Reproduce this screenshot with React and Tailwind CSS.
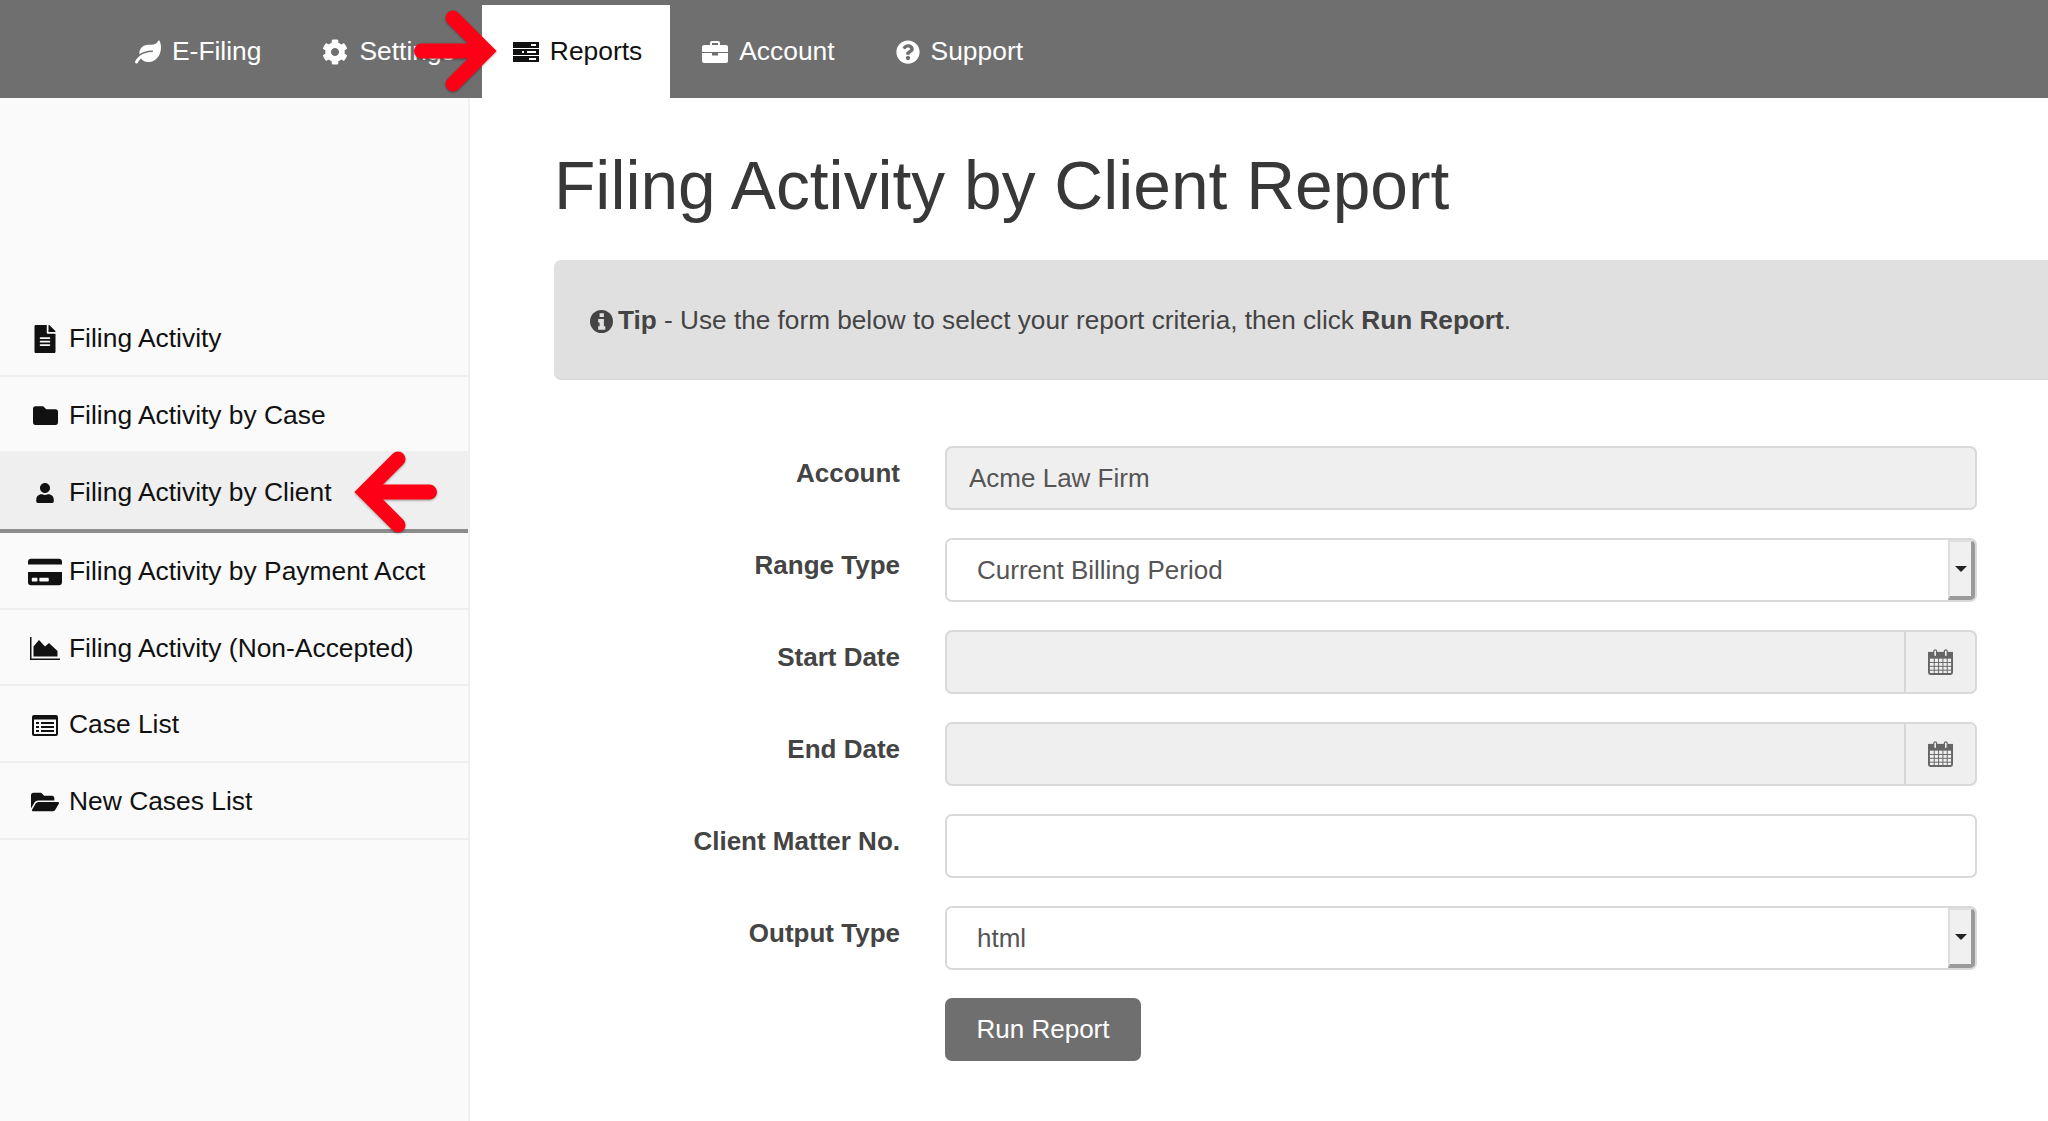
import React from 'react';
import {
  FaLeaf, FaCog, FaQuestionCircle, FaFileAlt, FaFolder, FaUser,
  FaCreditCard, FaFolderOpen,
} from 'react-icons/fa';

function ServerIcon({ className }) {
  return (
    <svg viewBox="0 0 26 20" className={className}>
      <rect x="0" y="0" width="26" height="6" fill="currentColor" />
      <rect x="0" y="7" width="26" height="6" fill="currentColor" />
      <rect x="0" y="14" width="26" height="6" fill="currentColor" />
      <rect x="18" y="2" width="5" height="2" fill="#fff" />
      <rect x="9" y="9" width="2" height="2" fill="#fff" />
      <rect x="14" y="9" width="9" height="2" fill="#fff" />
      <rect x="16" y="16" width="7" height="2" fill="#fff" />
    </svg>
  );
}

function BriefcaseIcon({ className }) {
  return (
    <svg viewBox="0 0 26 22" className={className}>
      <path fill="currentColor" fillRule="evenodd" d="M8 4V2a2 2 0 0 1 2-2h6a2 2 0 0 1 2 2v2h6a2 2 0 0 1 2 2v5H0V6a2 2 0 0 1 2-2zm2 0h6V2h-6z" />
      <path fill="currentColor" d="M0 12h10v2.500h6V12h10v8a2 2 0 0 1-2 2H2a2 2 0 0 1-2-2z" />
    </svg>
  );
}

function AreaChartIcon({ className }) {
  return (
    <svg viewBox="0 0 30 23" className={className}>
      <path fill="currentColor" d="M0 0h1.500v21.500H30V23H0z" />
      <path fill="currentColor" d="M3.500 19.500V9.500L9 3l6 6.500 4-3.500 8.500 8v5.500z" />
    </svg>
  );
}

function ListAltIcon({ className }) {
  return (
    <svg viewBox="0 0 26 21" className={className}>
      <path fill="currentColor" fillRule="evenodd" d="M2 0h22a2 2 0 0 1 2 2v17a2 2 0 0 1-2 2H2a2 2 0 0 1-2-2V2a2 2 0 0 1 2-2zm0 4.500V19h22V4.500z" />
      <path fill="currentColor" d="M4 7h3v2H4zM9 7h13v2H9zM4 11h3v2H4zM9 11h13v2H9zM4 15h3v2H4zM9 15h13v2H9z" />
    </svg>
  );
}

function InfoIcon({ className }) {
  return (
    <svg viewBox="0 0 24 24" className={className}>
      <circle cx="12" cy="12" r="12" fill="currentColor" />
      <path fill="#e0e0e0" d="M10 3.500h4.500v3.800H10zM8.500 9.500h6V17H16v3.500H8.500V17H10v-4H8.500z" />
    </svg>
  );
}

const navItems = [
  { label: 'E-Filing', icon: FaLeaf, iconSize: 'w-[26px] h-[26px]', pad: 'pl-[30px] pr-[30px]' },
  { label: 'Settings', icon: FaCog, iconSize: 'w-[26px] h-[26px]', pad: 'pl-[31px] pr-[27px]' },
  { label: 'Reports', icon: ServerIcon, iconSize: 'w-[26px] h-[20px]', pad: 'pl-[31px] pr-[28px]', active: true },
  { label: 'Account', icon: BriefcaseIcon, iconSize: 'w-[26px] h-[22px]', pad: 'pl-[32px] pr-[30px]' },
  { label: 'Support', icon: FaQuestionCircle, iconSize: 'w-[24px] h-[24px]', pad: 'pl-[31px] pr-[30px]' },
];

const sideItems = [
  { label: 'Filing Activity', icon: FaFileAlt, iconSize: 'w-[24px] h-[28px]' },
  { label: 'Filing Activity by Case', icon: FaFolder, iconSize: 'w-[25px] h-[25px]' },
  { label: 'Filing Activity by Client', icon: FaUser, iconSize: 'w-[20px] h-[20px]', active: true },
  { label: 'Filing Activity by Payment Acct', icon: FaCreditCard, iconSize: 'w-[34px] h-[34px]' },
  { label: 'Filing Activity (Non-Accepted)', icon: AreaChartIcon, iconSize: 'w-[30px] h-[23px]' },
  { label: 'Case List', icon: ListAltIcon, iconSize: 'w-[26px] h-[21px]' },
  { label: 'New Cases List', icon: FaFolderOpen, iconSize: 'w-[28px] h-[28px]' },
];

// Red annotation arrow, points right unless flipped
function Arrow({ className, flip }) {
  return (
    <svg
      viewBox="0 0 90 84"
      className={`absolute z-20 pointer-events-none drop-shadow-[0_1px_1px_rgba(0,0,0,0.35)] ${className}`}
    >
      <g transform={flip ? 'translate(90 0) scale(-1 1)' : undefined} fill="none" stroke="#fe0016" strokeWidth="15" strokeLinecap="round" strokeLinejoin="miter">
        <path d="M11.500 42H72" />
        <path d="M43 9L76 42L43 75" />
      </g>
    </svg>
  );
}

function CalendarIcon() {
  return (
    <svg viewBox="0 0 26 27" className="w-[25px] h-[26px]" fill="none" stroke="#666">
      <rect x="1" y="4" width="24" height="22" rx="1.5" strokeWidth="2" />
      <rect x="1" y="4" width="24" height="5" fill="#666" strokeWidth="2" />
      <path d="M1 14H25M1 18H25M1 22H25M6.500 9V26M11 9V26M15.500 9V26M20 9V26" strokeWidth="1" />
      <rect x="6" y="1" width="3" height="7" rx="1.5" fill="#f0f0f0" strokeWidth="1.300" />
      <rect x="17" y="1" width="3" height="7" rx="1.5" fill="#f0f0f0" strokeWidth="1.300" />
    </svg>
  );
}

function FormRow({ label, children }) {
  return (
    <div className="flex items-start gap-[45px]">
      <label className="w-[346px] text-right font-bold text-[26px] leading-[54px] text-[#444]">{label}</label>
      <div className="flex-1 h-[64px]">{children}</div>
    </div>
  );
}

function SelectField({ value }) {
  return (
    <div className="flex h-full rounded-[7px] border-2 border-[#d9d9d9] bg-white overflow-hidden">
      <select defaultValue={value} className="flex-1 appearance-none bg-white pl-[30px] text-[26px] text-[#555] outline-none">
        <option>{value}</option>
      </select>
      <div className="w-[27px] flex items-center justify-center bg-[#f0f0f0] border-l-2 border-t-2 border-l-[#dedede] border-t-[#dedede] border-r-[4px] border-b-[4px] border-r-[#9a9a9a] border-b-[#9a9a9a]">
        <span className="w-0 h-0 border-x-[6px] border-x-transparent border-t-[6px] border-t-[#222]" />
      </div>
    </div>
  );
}

function DateField() {
  return (
    <div className="flex h-full rounded-[7px] border-2 border-[#d9d9d9] bg-[#efefef] overflow-hidden">
      <div className="flex-1" />
      <div className="w-[71px] flex items-center justify-center pr-[1px] border-l-2 border-[#d6d6d6]">
        <CalendarIcon />
      </div>
    </div>
  );
}

export default function App() {
  return (
    <div className="relative h-[1121px] w-[2048px] overflow-hidden bg-white flex flex-col font-['Liberation_Sans',Arial,sans-serif]">
      <Arrow className="left-[410px] top-[9px] w-[90px] h-[84px]" />
      <Arrow flip className="left-[351px] top-[450px] w-[90px] h-[84px]" />

      <nav className="h-[98px] shrink-0 bg-[#6f6f6f] flex items-end pl-[105px] text-[26.4px]">
        {navItems.map(({ label, icon: Icon, iconSize, pad, active }) => (
          <div
            key={label}
            className={`h-[93px] flex items-center gap-[11px] ${pad} ${active ? 'bg-white text-[#111]' : 'text-white'}`}
          >
            <Icon className={iconSize} />
            <span>{label}</span>
          </div>
        ))}
      </nav>

      <div className="flex-1 flex min-h-0">
        <aside className="w-[470px] shrink-0 bg-[#fafafa] border-r-2 border-[#f0f0f0] pt-[202px]">
          {sideItems.map(({ label, icon: Icon, iconSize, active }) => (
            <div
              key={label}
              className={`flex items-center text-[26.4px] text-[#111] pl-[28px] ${active ? 'h-[80px] pt-[4px] bg-[#efefef] border-b-[4px] border-[#8c8c8c]' : 'h-[76.6px] pt-[3px] border-b-2 border-[#efefef]'}`}
            >
              <span className="w-[34px] mr-[7px] flex justify-center">
                <Icon className={iconSize} />
              </span>
              {label}
            </div>
          ))}
        </aside>

        <main className="flex-1 min-w-0 pl-[84px]">
          <h1 className="text-[67.7px] leading-[76px] text-[#383838] mt-[50px] mb-[36px]">Filing Activity by Client Report</h1>

          <div className="h-[120px] rounded-l-[7px] bg-[#e0e0e0] flex items-center pl-[36px] pt-[3px] text-[26.2px] text-[#444] border-b border-[#d8d8d8]">
            <InfoIcon className="w-[23px] h-[23px] mr-[5px]" />
            <b>Tip</b>
            <span className="whitespace-pre"> - Use the form below to select your report criteria, then click </span>
            <b>Run Report</b>.
          </div>

          <form className="mt-[66px] pr-[71px] flex flex-col gap-[28px]">
            <FormRow label="Account">
              <input readOnly value="Acme Law Firm" className="w-full h-full rounded-[7px] border-2 border-[#d9d9d9] bg-[#efefef] px-[22px] text-[26px] text-[#555] outline-none" />
            </FormRow>
            <FormRow label="Range Type">
              <SelectField value="Current Billing Period" />
            </FormRow>
            <FormRow label="Start Date">
              <DateField />
            </FormRow>
            <FormRow label="End Date">
              <DateField />
            </FormRow>
            <FormRow label="Client Matter No.">
              <input className="w-full h-full rounded-[7px] border-2 border-[#d9d9d9] bg-white px-[22px] text-[26px] outline-none" />
            </FormRow>
            <FormRow label="Output Type">
              <SelectField value="html" />
            </FormRow>
            <div className="pl-[391px]">
              <button type="button" className="w-[196px] h-[63px] rounded-[7px] bg-[#6f6f6f] text-white text-[26px]">Run Report</button>
            </div>
          </form>
        </main>
      </div>
    </div>
  );
}
